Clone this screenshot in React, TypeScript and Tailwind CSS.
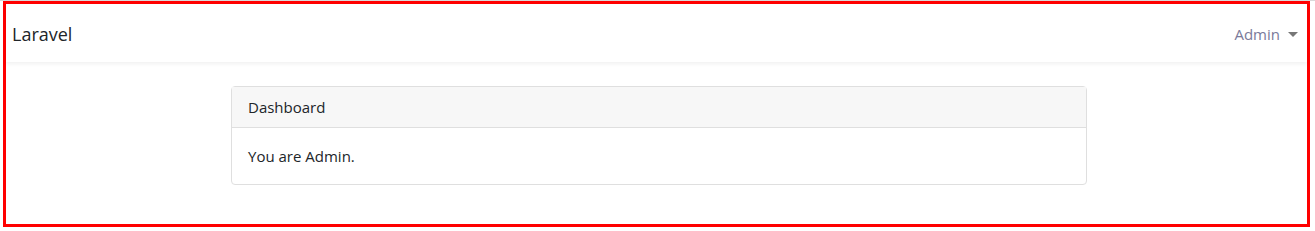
export default function App() {
  return (
    <div className="relative h-[231px] w-[1315px] overflow-hidden bg-white" style={{ fontFamily: '"Open Sans", "Noto Sans", sans-serif' }}>
      {/* browser edge */}
      <div className="h-px w-full bg-[#d9d9d9]" />
      <div className="ml-[3px] flex h-[226px] w-[1307px] flex-col border-[3px] border-[#ff0000] bg-white">
        {/* Navbar */}
        <nav className="flex h-[58px] items-center justify-between bg-white pt-[3px] pl-[6px] pr-[9px] shadow-[0_2px_4px_rgba(0,0,0,0.06)]">
          <a className="text-[18px] text-[#212529]">Laravel</a>
          <div className="flex items-center gap-[8px] text-[15px] text-[#7a7a9a]">
            <span>Admin</span>
            <span className="h-0 w-0 border-x-[5px] border-t-[5px] border-x-transparent border-t-[#777]" />
          </div>
        </nav>

        {/* Content */}
        <main className="pt-[24px] pl-[225px]">
          <div className="w-[856px] rounded-[4px] border border-[#dfdfdf] bg-white">
            <div className="flex h-[41px] items-center border-b border-[#dfdfdf] bg-[#f7f7f7] px-[16px] text-[15px] text-[#212529]">
              Dashboard
            </div>
            <div className="flex h-[56px] items-center px-[16px] text-[15px] text-[#212529]">
              You are Admin.
            </div>
          </div>
        </main>
      </div>
    </div>
  );
}
